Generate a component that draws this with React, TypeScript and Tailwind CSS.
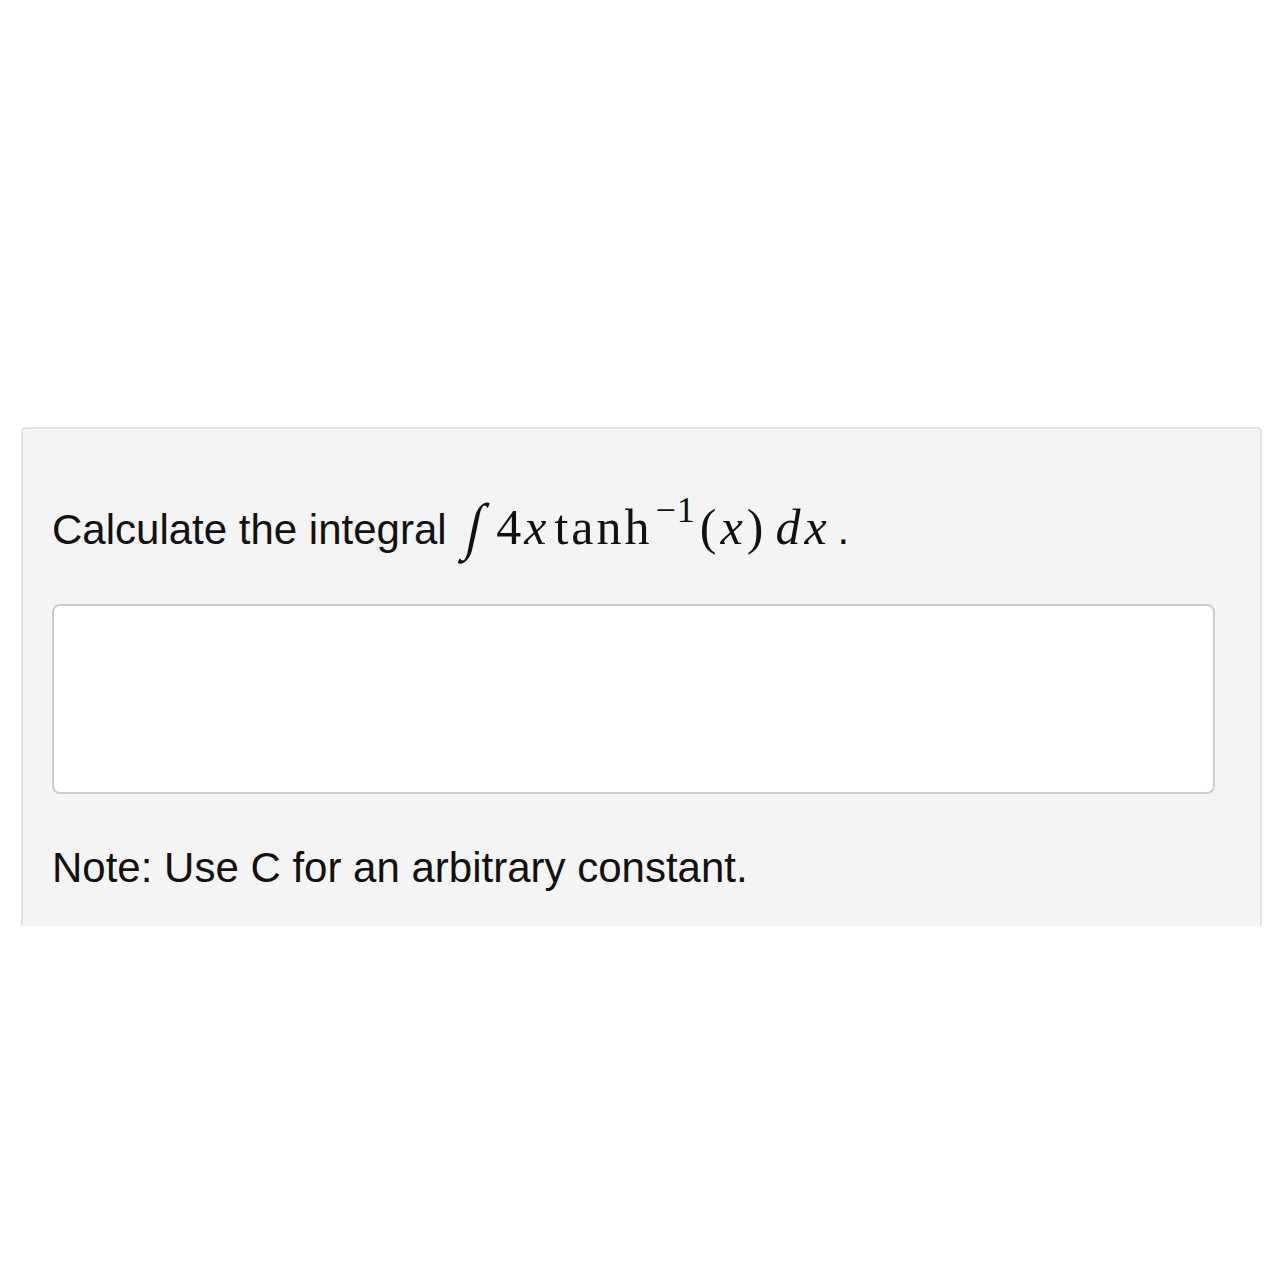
export default function App() {
  const serif = "font-['Liberation_Serif','DejaVu_Serif',serif]";
  return (
    <div className="min-h-[1284px] bg-white">
      <div className="pt-[427px] pl-[21px]">
        <div className="h-[499px] w-[1241px] overflow-hidden rounded-t-[5px] border-x-2 border-t-2 border-[#e2e2e2] bg-[#f4f4f4] pl-[29px] pt-[77px] font-['Liberation_Sans',Arial,sans-serif] text-[42px] leading-[48px] text-[#111]">
          <p className="h-[48px] whitespace-nowrap">
            Calculate the integral{" "}
            <span className={`${serif} text-[50px] leading-[40px] tracking-[3px]`}>
              <span className="relative top-[0px] ml-[4px] inline-block w-[26px] -skew-x-[14deg] scale-y-[1.2] text-center text-[52px] leading-[20px] font-light tracking-normal">
                ∫
              </span>
              <span className="ml-[8px]">4</span>
              <i className="mr-[2px]">x</i>
              <span className="ml-[3px]">tanh</span>
              <sup className="relative -top-[22px] ml-[3px] align-baseline text-[36px] leading-none tracking-[1px]">−1</sup>
              <span className="ml-[4px]">(</span>
              <i className="mx-[1px]">x</i>)
              <i className="ml-[9px] tracking-[4px]">dx</i>
            </span>
            <span className="ml-[7px]">.</span>
          </p>
          <div className="mt-[50px] h-[190px] w-[1163px] rounded-[8px] border-2 border-[#cdcdcd] bg-white" />
          <p className="mt-[50px] whitespace-nowrap">Note: Use C for an arbitrary constant.</p>
        </div>
      </div>
    </div>
  );
}
